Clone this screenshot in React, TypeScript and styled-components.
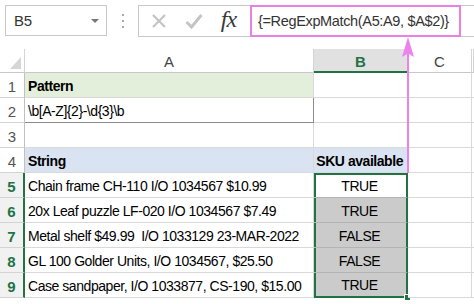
import React from 'react';
import styled, { createGlobalStyle } from 'styled-components';

const GlobalStyle = createGlobalStyle`
  html, body { margin: 0; padding: 0; background: #fff; }
  body { font-family: "Liberation Sans", Arial, sans-serif; }
  * { box-sizing: border-box; }
`;

const SEL = '#217346';

const Page = styled.div`
  position: relative;
  width: 474px;
  height: 304px;
  overflow: hidden;
  background: #fff;
`;

const Toolbar = styled.div`
  display: flex;
  align-items: center;
  height: 38px;
  padding: 3px 0 0 5px;
`;

const NameBox = styled.div`
  width: 102px;
  height: 31px;
  border: 1px solid #c8c8c8;
  display: flex;
  align-items: center;
  justify-content: space-between;
  padding: 0 7px 0 8px;
  font-size: 15px;
  letter-spacing: -0.3px;
  color: #333;
`;

const Caret = styled.span`
  width: 0;
  height: 0;
  border-left: 4px solid transparent;
  border-right: 4px solid transparent;
  border-top: 4px solid #777;
`;

const Dots = styled.div`
  width: 31px;
  display: flex;
  flex-direction: column;
  align-items: center;
  gap: 4px;
  span {
    width: 2px;
    height: 2px;
    background: #aaa;
  }
`;

const FormulaBar = styled.div`
  flex: 1;
  height: 32px;
  display: flex;
  align-items: stretch;
  border-top: 1px solid #c8c8c8;
  border-bottom: 1px solid #c8c8c8;
  border-left: 1px solid #c8c8c8;
`;

const IconStrip = styled.div`
  width: 111px;
  display: flex;
  align-items: center;
  padding-left: 2px;
`;

const IconSlot = styled.div`
  width: 35px;
  display: flex;
  align-items: center;
  justify-content: center;
`;

const Fx = styled.span`
  font-family: "Liberation Serif", "DejaVu Serif", serif;
  font-style: italic;
  font-size: 24px;
  color: #3a3a3a;
  letter-spacing: -1px;
  margin-top: -2px;
`;

const FormulaInput = styled.div`
  width: 211px;
  border: 2px solid #ea80e6;
  margin: -1px 0;
  display: flex;
  align-items: center;
  padding-left: 6px;
  font-size: 14.5px;
  letter-spacing: -0.35px;
  white-space: nowrap;
  color: #333;
`;

const Sheet = styled.div`
  margin-top: 11px;
  display: grid;
  grid-template-columns: 25px 289px 94px 64px 2px;
  grid-template-rows: 24px repeat(9, 25px);
`;

const Corner = styled.div`
  border-right: 1px solid #d4d4d4;
  border-bottom: 1px solid #c8c8c8;
  display: flex;
  align-items: flex-end;
  justify-content: flex-end;
  padding: 0 3px 3px 0;
`;

const ColHeader = styled.div<{ $active?: boolean }>`
  display: flex;
  align-items: center;
  justify-content: center;
  font-size: 15px;
  padding-top: 2px;
  color: ${p => (p.$active ? SEL : '#444')};
  font-weight: ${p => (p.$active ? 700 : 400)};
  background: ${p => (p.$active ? '#e1e1e1' : '#fff')};
  border-right: 1px solid #d4d4d4;
  border-bottom: ${p => (p.$active ? `2px solid ${SEL}` : '1px solid #c8c8c8')};
`;

const RowHeader = styled.div<{ $active?: boolean }>`
  display: flex;
  align-items: center;
  justify-content: center;
  font-size: 15px;
  padding-top: 2px;
  color: ${p => (p.$active ? SEL : '#555')};
  font-weight: ${p => (p.$active ? 700 : 400)};
  background: ${p => (p.$active ? '#f1f1f1' : '#fff')};
  border-bottom: 1px solid #d4d4d4;
  border-right: ${p => (p.$active ? `2px solid ${SEL}` : '1px solid #c0c0c0')};
`;

type Sel = 'top' | 'mid' | 'bottom';

const Cell = styled.div<{ $bg?: string; $bold?: boolean; $align?: string; $edge?: boolean; $sel?: Sel }>`
  position: relative;
  display: flex;
  align-items: flex-end;
  justify-content: ${p => p.$align || 'flex-start'};
  padding: 0 4px 3px 3px;
  font-size: 14px;
  letter-spacing: -0.45px;
  color: #000;
  white-space: nowrap;
  font-weight: ${p => (p.$bold ? 700 : 400)};
  background: ${p => p.$bg || '#fff'};
  border-right: ${p => (p.$sel ? `2px solid ${SEL}` : `1px solid ${p.$edge ? '#8c8c8c' : '#d9d9d9'}`)};
  border-bottom: ${p =>
    p.$sel === 'bottom'
      ? `2px solid ${SEL}`
      : p.$sel
        ? '1px solid #b4b4b4'
        : `1px solid ${p.$edge ? '#8c8c8c' : '#d9d9d9'}`};
  box-shadow: ${p =>
    p.$sel === 'top'
      ? `inset 2px 0 0 ${SEL}, inset 0 2px 0 ${SEL}`
      : p.$sel
        ? `inset 2px 0 0 ${SEL}`
        : 'none'};
`;

const FillHandle = styled.span`
  position: absolute;
  right: -5px;
  bottom: -5px;
  width: 7px;
  height: 7px;
  background: ${SEL};
  border: 1px solid #fff;
`;

const Arrow = styled.svg`
  position: absolute;
  left: 400px;
  top: 35px;
`;

const GREEN = '#e3efda';
const BLUE = '#dae3f1';
const GRAY = '#cbcbcb';

const rows = [
  { text: 'Chain frame CH-110 I/O 1034567 $10.99', result: 'TRUE' },
  { text: '20x Leaf puzzle LF-020 I/O 1034567 $7.49', result: 'TRUE' },
  { text: 'Metal shelf $49.99\u00a0 I/O 1033129 23-MAR-2022', result: 'FALSE' },
  { text: 'GL 100 Golder Units, I/O 1034567, $25.50', result: 'FALSE' },
  { text: 'Case sandpaper, I/O 1033877, CS-190, $15.00', result: 'TRUE' },
];

function Blank() {
  return <Cell />;
}

export default function App() {
  return (
    <Page>
      <GlobalStyle />
      <Toolbar>
        <NameBox>
          B5
          <Caret />
        </NameBox>
        <Dots>
          <span />
          <span />
          <span />
        </Dots>
        <FormulaBar>
          <IconStrip>
            <IconSlot>
              <svg width="16" height="16" viewBox="0 0 16 16">
                <path d="M2 2 L14 14 M14 2 L2 14" stroke="#c4c4c4" strokeWidth="2.2" fill="none" />
              </svg>
            </IconSlot>
            <IconSlot>
              <svg width="18" height="16" viewBox="0 0 18 16">
                <path d="M1.5 9 L6.5 14 L16.5 2" stroke="#c4c4c4" strokeWidth="3" fill="none" />
              </svg>
            </IconSlot>
            <IconSlot>
              <Fx>fx</Fx>
            </IconSlot>
          </IconStrip>
          <FormulaInput>{'{=RegExpMatch(A5:A9, $A$2)}'}</FormulaInput>
        </FormulaBar>
      </Toolbar>

      <Sheet>
        <Corner>
          <svg width="11" height="12" viewBox="0 0 11 12">
            <polygon points="11,0 11,12 0,12" fill="#d6d6d6" />
          </svg>
        </Corner>
        <ColHeader>A</ColHeader>
        <ColHeader $active>B</ColHeader>
        <ColHeader>C</ColHeader>
        <ColHeader />

        <RowHeader>1</RowHeader>
        <Cell $bg={GREEN} $bold>Pattern</Cell>
        <Blank />
        <Blank />
        <Blank />

        <RowHeader>2</RowHeader>
        <Cell $edge>{'\\b[A-Z]{2}-\\d{3}\\b'}</Cell>
        <Blank />
        <Blank />
        <Blank />

        <RowHeader>3</RowHeader>
        <Blank />
        <Blank />
        <Blank />
        <Blank />

        <RowHeader>4</RowHeader>
        <Cell $bg={BLUE} $bold>String</Cell>
        <Cell $bg={BLUE} $bold $align="flex-end">SKU available</Cell>
        <Blank />
        <Blank />

        {rows.map((r, i) => {
          const sel: Sel = i === 0 ? 'top' : i === rows.length - 1 ? 'bottom' : 'mid';
          return (
            <React.Fragment key={i}>
              <RowHeader $active>{i + 5}</RowHeader>
              <Cell>{r.text}</Cell>
              <Cell $bg={i === 0 ? '#fff' : GRAY} $align="center" $sel={sel}>
                {r.result}
                {sel === 'bottom' && <FillHandle />}
              </Cell>
              <Blank />
              <Blank />
            </React.Fragment>
          );
        })}
      </Sheet>

      <Arrow width="16" height="140" viewBox="0 0 16 140">
        <path d="M8 2 L2 22 L7 19 L7 138 L9 138 L9 19 L14 22 Z" fill="#ee82ec" />
      </Arrow>
    </Page>
  );
}
